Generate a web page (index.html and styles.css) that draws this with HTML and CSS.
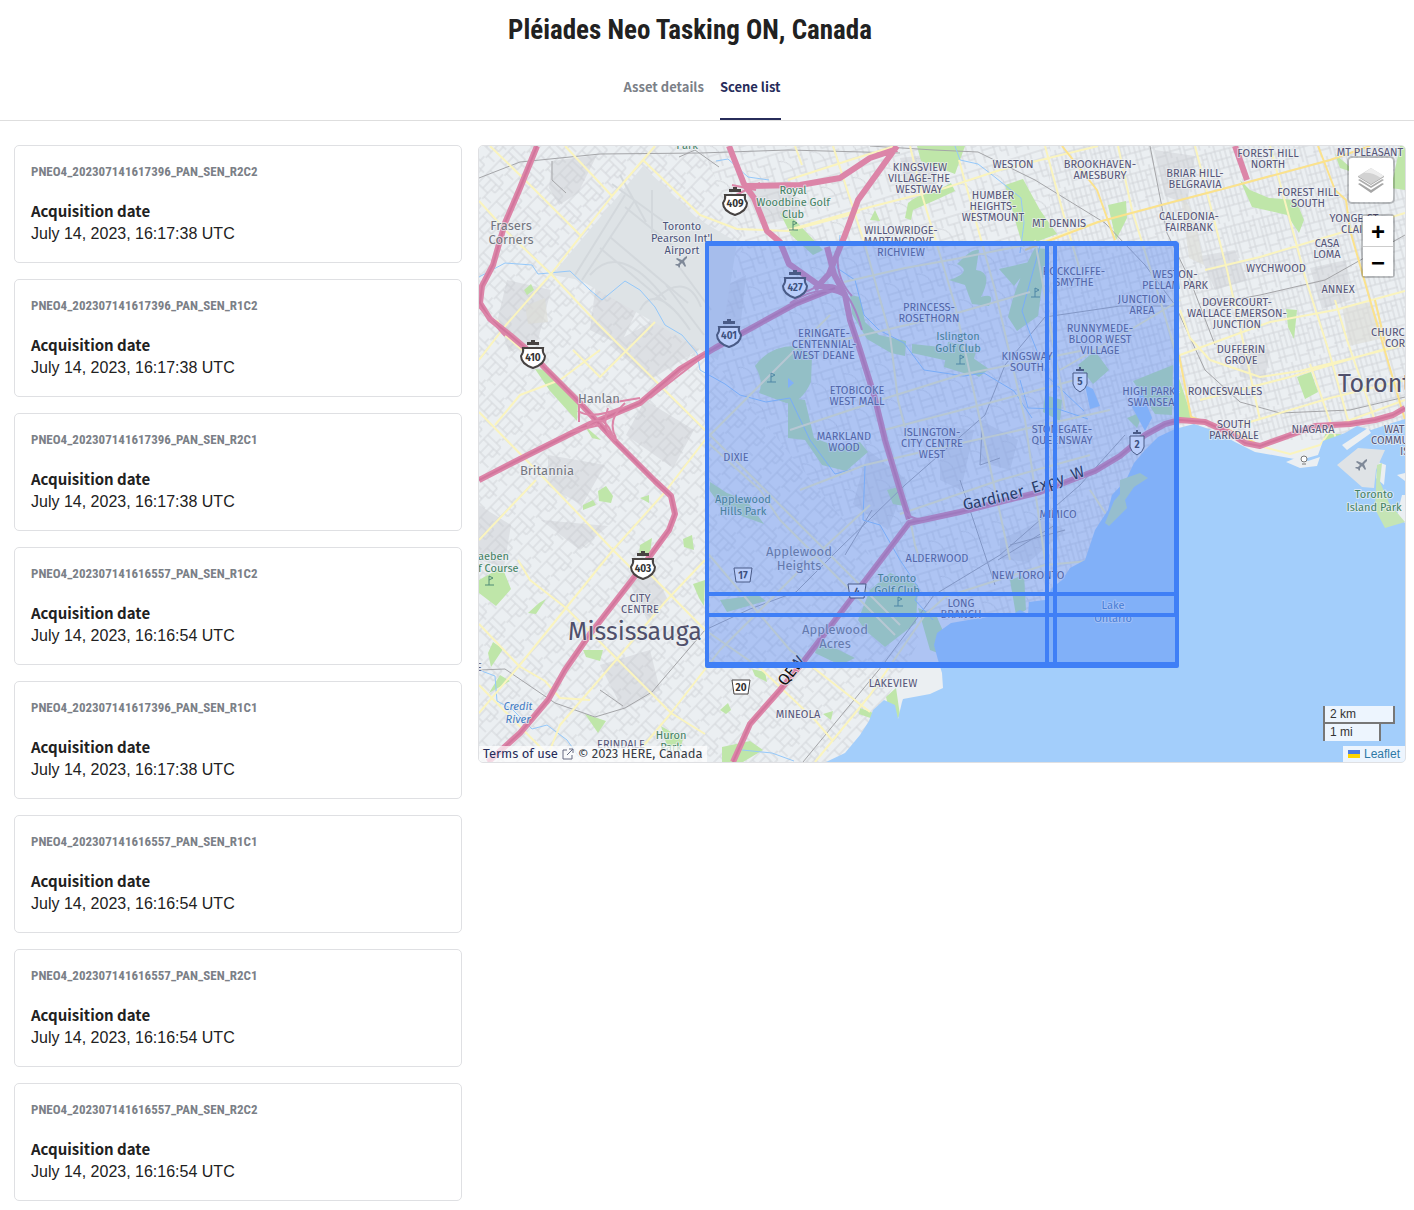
FILE: index.html
```html
<!DOCTYPE html>
<html lang="en">
<head>
<meta charset="utf-8">
<meta name="viewport" content="width=device-width, initial-scale=1">
<title>Pléiades Neo Tasking ON, Canada</title>
<link rel="stylesheet" href="styles.css">
</head>
<body>
<header class="header">
  <h1 class="title">Pléiades Neo Tasking ON, Canada</h1>
  <nav class="tabs">
    <a class="tab" href="#details">Asset details</a>
    <a class="tab tab-active" href="#scenes" aria-current="page">Scene list</a>
  </nav>
</header>
<main class="content">
  <section class="scenes" id="scenes">
    <article class="card"><h2 class="scene-name">PNEO4_202307141617396_PAN_SEN_R2C2</h2><h3 class="label">Acquisition date</h3><p class="date">July 14, 2023, 16:17:38 UTC</p></article>
    <article class="card"><h2 class="scene-name">PNEO4_202307141617396_PAN_SEN_R1C2</h2><h3 class="label">Acquisition date</h3><p class="date">July 14, 2023, 16:17:38 UTC</p></article>
    <article class="card"><h2 class="scene-name">PNEO4_202307141617396_PAN_SEN_R2C1</h2><h3 class="label">Acquisition date</h3><p class="date">July 14, 2023, 16:17:38 UTC</p></article>
    <article class="card"><h2 class="scene-name">PNEO4_202307141616557_PAN_SEN_R1C2</h2><h3 class="label">Acquisition date</h3><p class="date">July 14, 2023, 16:16:54 UTC</p></article>
    <article class="card"><h2 class="scene-name">PNEO4_202307141617396_PAN_SEN_R1C1</h2><h3 class="label">Acquisition date</h3><p class="date">July 14, 2023, 16:17:38 UTC</p></article>
    <article class="card"><h2 class="scene-name">PNEO4_202307141616557_PAN_SEN_R1C1</h2><h3 class="label">Acquisition date</h3><p class="date">July 14, 2023, 16:16:54 UTC</p></article>
    <article class="card"><h2 class="scene-name">PNEO4_202307141616557_PAN_SEN_R2C1</h2><h3 class="label">Acquisition date</h3><p class="date">July 14, 2023, 16:16:54 UTC</p></article>
    <article class="card"><h2 class="scene-name">PNEO4_202307141616557_PAN_SEN_R2C2</h2><h3 class="label">Acquisition date</h3><p class="date">July 14, 2023, 16:16:54 UTC</p></article>
  </section>

  <section class="map" aria-label="Map">
    <svg class="map-canvas" viewBox="479 146 926 616" preserveAspectRatio="xMidYMid slice">
      <defs>
        <pattern id="streets-west" width="32" height="26" patternUnits="userSpaceOnUse" patternTransform="rotate(-46)">
          <path class="street" d="M0 3H32M0 17H20M20 3V26M8 3V17M8 10H20M26 3V15H32M3 17V26M13 17V22H20M26 15V21H20"/>
        </pattern>
        <pattern id="streets-east" width="29" height="38" patternUnits="userSpaceOnUse" patternTransform="rotate(-15)">
          <path class="street" d="M0 5H29M0 14H17M0 23H29M11 31H29M3 0V38M8 5V23M13 0V38M18 5V38M23 0V23M28 5V38M18 10H23M3 34H13"/>
        </pattern>
        <pattern id="streets-mid" width="33" height="37" patternUnits="userSpaceOnUse" patternTransform="rotate(-17)">
          <path class="street" d="M0 4H33M4 4V37M4 12Q14 14 16 24M10 4V13M16 4V12H28M28 4V37M4 24H28M16 24V37M22 12V30H28M4 31H16M28 18H33"/>
        </pattern>
        <g id="crown-shield">
          <path class="shield-crown" d="M-6 -12v-3h4v-2h4v2h4v3z"/>
          <path class="shield" d="M-10 -9H10Q9 -5 12 -1Q12 7 0 11Q-12 7 -12 -1Q-9 -5 -10 -9Z"/>
        </g>
        <path id="county-shield" class="shield-thin" d="M-9 -7H9L7 7H-7Z"/>
        <g id="small-shield"><path class="shield-crown" d="M-4 -10v-2h3v-2h2v2h3v2z"/><path class="shield-thin" d="M-7 -8H7V3Q6 8 0 11Q-6 8 -7 3Z"/></g>
        <path id="golf" class="golf" d="M-4 4H5M0 4V-5L4 -3L0 -1"/>
        <path id="plane" class="plane" d="M5 -5L3 -4L0 -1L-5 -3L-6 -2L-2 1L-4 3L-6 3L-7 4L-4 5L-3 7L-2 6L-2 4L0 2L3 6L4 5L2 0L5 -3Z"/>
      </defs>

      <path class="land" d="M479 146H1405V762H479Z"/>
      <path fill="url(#streets-west)" d="M479 146H700L745 240L705 350L860 540L920 640L850 762H479Z"/>
      <path fill="url(#streets-mid)" d="M700 146H1050V620H920L860 540L705 350L745 240Z"/>
      <path fill="url(#streets-east)" d="M1050 146H1405V440H1180L1050 620Z"/>

      <g class="built">
        <path d="M552 161L597 155L578 193L559 205L549 188ZM597 276L642 300L620 345L590 330ZM507 280L551 290L538 340L509 352L498 318ZM610 345L690 300L704 346L650 380ZM645 400L694 430L673 468L626 435ZM548 455L605 465L582 505L548 486ZM479 505L511 525L504 567L479 560ZM541 520L608 526L580 550ZM629 582L655 574L668 600L648 622ZM600 665L650 650L660 690L623 710ZM700 300L746 275L740 330L706 345Z"/>
        <path d="M745 190L790 180L802 218L760 224ZM900 158L942 153L934 184L905 184ZM1155 150L1195 156L1187 204L1165 196ZM1200 256L1235 250L1247 280L1215 290ZM1310 268L1346 260L1350 300L1322 309ZM1240 345L1270 350L1265 380L1240 377ZM868 450L907 480L888 530L853 504ZM940 425L974 430L961 490L940 480ZM1000 540L1042 520L1066 530L1029 562L1000 559ZM980 420L1018 440L1010 470L981 462Z"/>
      </g>
      <path class="airport" d="M643 166L698 219L737 242L718 360L650 320L580 280L552 275Z"/>
      <path class="runways" d="M575 275L625 195M582 280L635 200M600 248L674 310M610 237L688 303M625 207L678 250M612 184L663 221M620 175L646 222M652 190V240M590 275Q620 240 666 300M654 300Q687 270 701 307M666 285L704 335M680 268L711 310M640 310Q656 280 690 330"/>

      <g class="park">
        <path d="M535 369L545 370L578 403L577 421L550 391ZM585 426L601 440L592 438ZM598 491L606 486L613 496L611 503L599 501ZM479 580L502 567L511 589L496 606L479 593ZM583 505l10-5l3 5l-13 5zM640 545l12-7l-2 15l-11 3zM683 539l9-4l2 15l-10-3zM693 584l12-4l-1 26l-5-8zM539 603l7-4l-10 15l-8-1zM583 650l20 0l-3 11l-14-4zM493 642l10 7l-12 18l-3-14zM500 675l10 6l-21 12zM722 747l28-6l13 9l-20 12h-21zM752 669l13 3l2 10l-12-6zM720 710l8-7l3 7l-5 4zM823 714l10-3l-2 9zM661 726l22 13l-4 14l-12-7zM585 714l21 7l-8 12zM524 290l7-6l3 6l-7 5zM640 498l9-3v8z"/>
        <path d="M917 146H965L955 174L921 161ZM908 203q10-9 25-10l18-10l4 8l-17 8l-25 11l-2 10l-6-2zM870 220l5-10l5 11zM780 213l13 5l30 32l-10 5l-22-20zM1005 185l18-6l17 31l17 24l-34 13zM957 264q15-16 22-14l-3 20q18 2 5 27q15-5 8 9l-17-2l-7-19l-16-5q25-8 8-16zM1035 248l12 1l-9 67l-21 15l-9-14q8-36 27-69zM850 295l10 2l5 25l14 13l27 6l-1 15l-14-3l-24-14l-15-25zM755 366q15-21 42-20l15 10l-1 26q-10 22-25 21l-27-10q5-12-4-27zM788 398l17 2l9 38l27 10l19-6l8 10l-22 19l-24-6l-17-25l-17-2zM912 344l48 5l29 20l-10 8l-26-15l-41-9zM999 269l35-8l-20 25zM948 342l29 5l-7 28l-26-8z"/>
        <path d="M710 482l17 11l20 8l17 23l-25-9l-19-10l-10-14zM870 590l20-17l28 12l-2 38l-31 24l-19-16l-8-11zM887 490l15-4l2 20l-11-2zM819 640l36 18l-15 7l-25-12zM918 608l18 7l11 25l-4 15l-13-5zM1010 580l14-5l2 35l-10 5zM1045 395l17 5l-2 21l-17-9zM1133 381l40-16l-1 50l-17-1zM1078 365l17-14l14 19l-16 14zM1127 418l17-7l-7 17zM1240 180l10 10l19 8l27 2l8 20l-5 13l-12-18l-35-8zM1108 205l18-4l1 17l-11 22zM1179 378l13 40h-13zM1297 377l14-5l7 20l-13 7zM1400 146h5v44l-14-2zM1286 309l11 1l-3 29l-6-12zM1335 154l23 20l-18-6z"/>
        <path d="M1376 465l8 4l3 25l12 18l6 12l-21 3l-9-20zM1325 434l16 0l-2 9l-16 2zM886 697l10-9l4 27l-7 10zM860 708l29 11l-10 2l-20-7zM720 600l38-5l8 6l-39 11z"/>
      </g>
      <path class="institution" d="M1342 306L1371 302L1384 338L1349 346ZM525 306L545 298L548 322L528 324ZM1180 192L1194 214L1204 265L1189 258Z"/>

      <g class="rail">
        <path d="M479 178L520 162L600 154L700 153L788 150L900 153M552 161V180L566 193M679 157L695 150L719 167M870 146L934 150L978 152L1035 180L1105 223L1145 265L1175 305L1205 370L1240 402L1280 413L1350 410L1405 397M1150 146L1167 233L1190 280L1215 345M1205 305L1260 295L1325 280L1405 235"/>
        <path d="M479 670L505 669L555 703L595 717L625 708L652 692L705 630L750 609L796 592L840 548L905 485L985 415L1005 365L1045 317L1120 306L1178 306M803 762L882 666L934 595L1000 555L1080 485L1125 435M960 480L985 555L995 585M845 555L872 510M1010 545L1065 530M998 560L1055 525M982 430L980 465L1000 458M600 690L623 706"/>
      </g>

      <g class="river">
        <path d="M479 277L505 263L532 265L538 274L570 271L590 290L602 300L625 281L640 290L655 307L665 325L682 335L697 353L700 370L725 384L740 395L766 402L790 398L810 440L835 474L865 466L863 520L880 525L900 560L920 590L915 600L933 620M716 161l12-2l20 18l21 3M955 146l5 14l18 4l13 10l30 24l3 25l-4 30M1040 246l-18 65l9 25l16 40l37 35M840 235l-3 33l18 12l9 35l15 15l25 13l20 27l40 6l20-3l30 18l18 27M1020 380l8 28l30 1l30 10M479 670l16 6l2 25l15 8l20 20l15-4l20 15l12 17M742 750l30 3l22 8"/>
      </g>

      <g class="road-yellow">
        <path d="M490 146L525 180L581 236M565 146L612 196M655 146L643 160L612 196L551 274L506 325L479 360M643 160L700 215L737 229L788 231L860 212M479 201L510 235L551 274L597 323L705 430L810 535L900 625M497 320L506 336L530 357M600 350L560 380L520 395L495 425M655 322L600 377L573 350M479 412L541 475L613 550L640 577M479 540L536 480M613 550L665 492L705 440L770 375L830 315M518 560L530 580L566 608L617 659L671 713L705 734M479 713L519 666L566 608L613 550M640 564L705 630L760 668L815 720L832 740M479 624L519 666L545 681L560 698L590 700M479 685L545 752M550 750L560 725L617 659L665 602L705 560M640 750L671 713L720 650L800 570L870 505M705 550L790 650L810 665L870 712M815 762L870 695L925 615L945 597L1045 565L1100 560M705 440L760 490L780 520L850 590L895 635"/>
        <path d="M788 180L850 160L895 146M788 230L870 207L945 188L1000 170L1098 146M795 146L802 165M833 146L844 180L865 245L890 335L898 400L908 440M910 146L922 195L955 305L980 420L1010 560M959 160L995 290L1025 420L1045 560M1045 146L1065 220L1080 270M1118 146L1132 210L1160 300L1178 360M1195 146L1227 270L1245 350L1260 420M1270 146L1306 280L1330 355L1348 420M1205 270L1260 257L1330 236L1405 213M1180 355L1270 322L1335 310L1405 291M1200 400L1290 377L1405 343M1240 425L1330 398L1405 380M1335 300L1347 340L1374 418M1310 364L1340 450M1180 310L1190 338L1210 360L1260 377L1300 371L1405 345M1065 410L1035 240M844 282L905 268L950 260L1045 241L1098 222M820 345L950 315L1030 292M790 430L880 400L960 375L1085 350M880 431L1000 400L1075 380M800 490L865 465L930 450L1110 410M900 514L1000 480L1090 455M910 519L915 545L920 560M1060 370L1130 330L1180 300M1090 490L1110 520L1100 550M1240 441L1290 454L1320 445L1334 426L1405 400"/>
      </g>
      <path class="road-gold" d="M1025 250L1098 222L1165 204L1230 187L1330 160L1370 146M1062 146L1097 190L1115 240M1318 146L1335 190L1346 200L1350 230L1370 300L1405 420M1179 355L1191 417M1191 417L1235 432L1255 443M1375 300L1385 343"/>

      <path class="water" d="M826 762L845 753L860 735L869 721L873 710L884 700L895 705L898 719L902 702L903 699L930 694L943 688L942 673L938 660L934 645L937 633L951 623L980 618L1013 614L1020 610L1028 614L1029 602L1045 600L1052 588L1062 580L1070 568L1085 560L1095 530L1108 510L1112 495L1126 480L1134 463L1145 450L1158 437L1175 429L1194 424L1215 431L1235 442L1255 452L1278 456L1300 460L1318 455L1323 441L1345 433L1357 426L1371 430L1389 424L1405 419V762Z"/>
      <path class="water" d="M1132 407L1142 392L1152 418L1145 431ZM1085 385l8 4l7 17l-10 3zM788 378l6 5l-6 5z"/>
      <path class="land" d="M1286 462l12-5l10 4l12-4l-3 9l-17 2zM1378 462l8 3l-2 20l-8-7zM1397 475l8-2v8zM1402 495l3 0v28l-8-8zM1342 445l26-17l3 5l-24 17z"/>
      <path class="airport-island" d="M1337 465L1358 448L1385 450L1376 470L1374 488L1362 487Z"/>
      <path class="island" d="M1377 465L1382 463L1380 482L1389 503L1405 522L1385 528L1375 509ZM1120 480l20-7l8 5l-14 9l-9 13l2 8l-18 18l-4-3l9-22l6-7z"/>

      <path class="highway" d="M537 146L520 188L505 223L493 265L482 286L480 303L490 319L510 335L530 352L545 368L580 403L616 442L655 481L671 496L675 514L669 530L650 556L632 580L590 634L565 670L548 700L520 733L488 762M479 480L530 454L590 424L640 403L680 369L715 348L795 304L835 288M729 146L744 184L754 198L767 231L780 242L789 264L820 286L845 292M744 186L800 185L840 178L870 158L897 149M897 146L858 200L845 235L829 274L815 289M827 247L834 274L845 295L850 320L860 350L874 395L885 440L900 490L909 519M733 762L750 724L780 690L803 662L855 594L909 523L960 512L1040 492L1095 471L1120 456L1145 435L1165 424L1180 420L1205 422L1230 433L1245 443L1260 446L1285 437L1315 426L1350 424L1375 420L1393 415L1405 408M1235 146L1247 180"/>
      <path class="highway-core" d="M537 146L520 188L505 223L493 265L482 286L480 303L490 319L510 335L530 352L545 368L580 403L616 442L655 481L671 496L675 514L669 530L650 556L632 580L590 634L565 670L548 700L520 733L488 762M479 480L530 454L590 424L640 403L680 369L715 348L795 304L835 288M850 320L860 350L874 395L885 440L900 490L909 519M733 762L750 724L780 690L803 662L855 594L909 523L960 512L1040 492L1095 471L1120 456L1145 435L1165 424L1180 420L1205 422L1230 433L1245 443L1260 446L1285 437L1315 426L1350 424L1375 420L1393 415L1405 408"/>
      <path class="ramp" d="M479 307L505 336M578 411Q592 420 620 408M579 405V422M587 426Q605 410 614 440M570 432L600 425M608 408Q600 430 616 441M610 403L640 398M625 403Q606 420 616 438M732 185L756 190M736 195L760 183M815 290Q845 270 862 330M790 303Q825 280 850 300M830 270Q825 285 805 292M905 512Q915 523 930 517M650 398L705 355M838 250Q835 278 852 296"/>

      <g class="place">
        <text x="920" y="171">KINGSVIEW</text><text x="919" y="182">VILLAGE-THE</text><text x="919" y="193">WESTWAY</text>
        <text x="1013" y="168">WESTON</text><text x="1100" y="168">BROOKHAVEN-</text><text x="1100" y="179">AMESBURY</text>
        <text x="993" y="199">HUMBER</text><text x="993" y="210">HEIGHTS-</text><text x="993" y="221">WESTMOUNT</text>
        <text x="1059" y="227">MT DENNIS</text><text x="1195" y="177">BRIAR HILL-</text><text x="1195" y="188">BELGRAVIA</text>
        <text x="1268" y="157">FOREST HILL</text><text x="1268" y="168">NORTH</text><text x="1370" y="156">MT PLEASANT</text>
        <text x="1308" y="196">FOREST HILL</text><text x="1308" y="207">SOUTH</text><text x="1189" y="220">CALEDONIA-</text><text x="1189" y="231">FAIRBANK</text>
        <text x="1355" y="222">YONGE-ST.</text><text x="1355" y="233">CLAIR</text><text x="1327" y="247">CASA</text><text x="1327" y="258">LOMA</text>
        <text x="1276" y="272">WYCHWOOD</text><text x="1338" y="293">ANNEX</text>
        <text x="901" y="234">WILLOWRIDGE-</text><text x="901" y="245">MARTINGROVE-</text><text x="901" y="256">RICHVIEW</text>
        <text x="1074" y="275">ROCKCLIFFE-</text><text x="1074" y="286">SMYTHE</text><text x="1175" y="278">WESTON-</text><text x="1175" y="289">PELLAM PARK</text>
        <text x="1142" y="303">JUNCTION</text><text x="1142" y="314">AREA</text><text x="1237" y="306">DOVERCOURT-</text><text x="1237" y="317">WALLACE EMERSON-</text><text x="1237" y="328">JUNCTION</text>
        <text x="929" y="311">PRINCESS-</text><text x="929" y="322">ROSETHORN</text><text x="824" y="337">ERINGATE-</text><text x="824" y="348">CENTENNIAL-</text><text x="824" y="359">WEST DEANE</text>
        <text x="1100" y="332">RUNNYMEDE-</text><text x="1100" y="343">BLOOR WEST</text><text x="1100" y="354">VILLAGE</text><text x="1241" y="353">DUFFERIN</text><text x="1241" y="364">GROVE</text>
        <text x="1027" y="360">KINGSWAY</text><text x="1027" y="371">SOUTH</text><text x="857" y="394">ETOBICOKE</text><text x="857" y="405">WEST MALL</text>
        <text x="1151" y="395">HIGH PARK-</text><text x="1151" y="406">SWANSEA</text><text x="1225" y="395">RONCESVALLES</text>
        <text x="844" y="440">MARKLAND</text><text x="844" y="451">WOOD</text><text x="932" y="436">ISLINGTON-</text><text x="932" y="447">CITY CENTRE</text><text x="932" y="458">WEST</text>
        <text x="1062" y="433">STONEGATE-</text><text x="1062" y="444">QUEENSWAY</text><text x="1234" y="428">SOUTH</text><text x="1234" y="439">PARKDALE</text><text x="1313" y="433">NIAGARA</text>
        <text x="736" y="461">DIXIE</text><text x="1058" y="518">MIMICO</text><text x="937" y="562">ALDERWOOD</text><text x="1028" y="579">NEW TORONTO</text>
        <text x="961" y="607">LONG</text><text x="961" y="618">BRANCH</text><text x="893" y="687">LAKEVIEW</text><text x="798" y="718">MINEOLA</text>
        <text x="640" y="602">CITY</text><text x="640" y="613">CENTRE</text><text x="621" y="748">ERINDALE</text>
        <text class="start" x="1371" y="336">CHURCH</text><text class="start" x="1385" y="347">CORKTOWN</text>
        <text class="start" x="1384" y="433">WATERFRONT</text><text class="start" x="1371" y="444">COMMUNITIES</text><text class="start" x="1400" y="455">ISLAND</text><text class="start" x="476" y="671">E</text>
      </g>
      <g class="town">
        <text x="511" y="230">Frasers</text><text x="511" y="244">Corners</text><text x="599" y="403">Hanlan</text><text x="547" y="475">Britannia</text>
        <text x="799" y="556">Applewood</text><text x="799" y="570">Heights</text><text x="835" y="634">Applewood</text><text x="835" y="648">Acres</text>
      </g>
      <g class="airport-name">
        <text x="682" y="230">Toronto</text><text x="682" y="242">Pearson Int'l</text><text x="682" y="254">Airport</text>
      </g>
      <g class="park-name">
        <text x="687" y="149">Park</text><text x="793" y="194">Royal</text><text x="793" y="206">Woodbine Golf</text><text x="793" y="218">Club</text>
        <text x="958" y="340">Islington</text><text x="958" y="352">Golf Club</text><text x="743" y="503">Applewood</text><text x="743" y="515">Hills Park</text>
        <text x="897" y="582">Toronto</text><text x="897" y="594">Golf Club</text><text x="1374" y="498">Toronto</text><text x="1374" y="511">Island Park</text>
        <text x="671" y="739">Huron</text><text x="671" y="751">Park</text><text class="start" x="478" y="560">aeben</text><text class="start" x="478" y="572">f Course</text>
      </g>
      <g class="water-name"><text x="1113" y="609">Lake</text><text x="1113" y="622">Ontario</text><text class="italic" x="518" y="710">Credit</text><text class="italic" x="518" y="723">River</text></g>
      <g class="city"><text x="635" y="640">Mississauga</text><text class="start" x="1338" y="392">Toronto</text></g>
      <path id="gardiner" class="text-path" d="M964 510Q1030 498 1100 470"/>
      <text class="road-name"><textPath href="#gardiner">Gardiner  Expy  W</textPath></text>
      <text class="road-name" transform="translate(785 687) rotate(-51)">QEW</text>

      <g class="route">
        <use href="#crown-shield" x="735" y="204"/><text x="735" y="207">409</text>
        <use href="#crown-shield" x="795" y="287"/><text x="795" y="291">427</text>
        <use href="#crown-shield" x="729" y="336"/><text x="729" y="339">401</text>
        <use href="#crown-shield" x="533" y="357"/><text x="533" y="361">410</text>
        <use href="#crown-shield" x="643" y="568"/><text x="643" y="572">403</text>
        <use href="#small-shield" x="1080" y="381"/><text x="1080" y="385">5</text>
        <use href="#small-shield" x="1137" y="444"/><text x="1137" y="448">2</text>
        <use href="#county-shield" x="743" y="575"/><text x="743" y="579">17</text>
        <use href="#county-shield" x="857" y="591"/><text x="857" y="595">4</text>
        <use href="#county-shield" x="741" y="687"/><text x="741" y="691">20</text>
      </g>
      <use href="#golf" x="793" y="226"/><use href="#golf" x="1035" y="293"/><use href="#golf" x="771" y="378"/><use href="#golf" x="960" y="360"/><use href="#golf" x="898" y="602"/><use href="#golf" x="489" y="581"/>
      <use href="#plane" x="682" y="261"/><use href="#plane" x="1362" y="464"/>
      <g class="lighthouse"><circle cx="1304" cy="459" r="3"/><path d="M1302 464h4"/></g>

      <g class="footprints">
        <rect class="footprint-fill" x="707" y="243" width="470" height="422"/>
        <path class="footprint-line" d="M707 243H1055V615H707ZM1047 243H1176V615H1047ZM707 594H1055V664H707ZM1047 594H1177V664H1047ZM707 244H1177V666H707Z"/>
      </g>
    </svg>

    <div class="controls">
      <button class="layers" type="button" aria-label="Layers">
        <svg width="26" height="26" viewBox="0 0 26 26" aria-hidden="true">
          <path fill="#a6a6a6" d="M0 17L4 15L13 20L22 15L26 17L13 26Z"/><path fill="#fff" d="M0 15L13 23L26 15L22 13H4Z"/>
          <path fill="#adadad" d="M0 13L4 11L13 16L22 11L26 13L13 21Z"/><path fill="#fff" d="M0 11L13 19L26 11L22 9H4Z"/>
          <path fill="#d2d2d2" d="M0 9L13 1L26 9L13 17Z"/><path fill="#ededed" d="M13 1L26 9L23 11Q14 5 6 6Z"/><path fill="#a6a6a6" d="M0 9L13 17L26 9V10L13 18L0 10Z"/>
        </svg>
      </button>
      <div class="zoom">
        <button class="zoom-button" type="button" aria-label="Zoom in">+</button>
        <button class="zoom-button" type="button" aria-label="Zoom out">−</button>
      </div>
    </div>
    <div class="attribution">
      <a class="terms" href="#terms">Terms of use
        <svg class="external" viewBox="0 0 12 12" aria-hidden="true"><path d="M5 2H1V11H10V7M7 1H11V5M11 1L5 7"/></svg></a>
      <span>© 2023 HERE, Canada</span>
    </div>
    <div class="corner">
      <div class="scale scale-km">2 km</div>
      <div class="scale scale-mi">1 mi</div>
      <div class="leaflet"><svg width="12" height="8" viewBox="0 0 12 8" aria-hidden="true"><path fill="#4c7be1" d="M0 0h12v4H0z"/><path fill="#ffd500" d="M0 4h12v4H0z"/></svg><a href="#leaflet">Leaflet</a></div>
    </div>
  </section>
</main>
</body>
</html>
```

FILE: styles.css
```css
* { box-sizing: border-box; }
body {
  margin: 0;
  background: #fff;
  color: #212121;
  font-family: "Liberation Sans", Arial, sans-serif;
  font-size: 16px;
}
h1, h2, h3, p { margin: 0; }

.header { border-bottom: 1px solid #dedede; }
.title {
  padding: 10px 34px 0 0;
  text-align: center;
  font: 700 27px/40px "Roboto Condensed", "Liberation Sans Narrow", Roboto, sans-serif;
}
.tabs {
  display: flex;
  justify-content: center;
  gap: 16px;
  padding: 26px 10px 0 0;
}
.tab {
  padding-bottom: 20px;
  border-bottom: 2px solid transparent;
  color: #7b8087;
  font: 700 13px/22px "Source Sans Pro", "Noto Sans CJK SC", sans-serif;
  text-decoration: none;
}
.tab-active { color: #272c5a; border-bottom-color: #272c5a; }

.content {
  display: grid;
  grid-template-columns: minmax(0, 14fr) minmax(0, 29fr);
  align-items: start;
  gap: 16px;
  padding: 24px 8px 8px 14px;
}
.scenes { display: grid; gap: 16px; }
.card {
  padding: 16px;
  border: 1px solid #dfe0e3;
  border-radius: 5px;
}
.scene-name {
  margin-bottom: 18px;
  color: #7b8087;
  font: 700 13px/20px "Roboto Condensed", "Liberation Sans Narrow", Roboto, sans-serif;
}
.label { font: 700 15px/22px "Source Sans Pro", "Noto Sans CJK SC", sans-serif; }
.date { font-size: 16px; line-height: 24px; }

.map {
  position: relative;
  overflow: hidden;
  border: 1px solid #dfe0e3;
  border-radius: 5px;
}
.map-canvas { display: block; width: 100%; height: auto; }

.land { fill: #ebeff2; }
.street { fill: none; stroke: #d2d5d9; stroke-width: 1; }
.built { fill: #c9cbd0; opacity: .4; }
.airport { fill: #dee3e6; }
.runways { fill: none; stroke: #d3d8dc; stroke-width: 2; }
.park { fill: #bfe6a9; }
.institution { fill: #dcdcd6; opacity: .6; }
.rail { fill: none; stroke: #a4a5a8; stroke-width: 1; }
.river { fill: none; stroke: #94c8fa; stroke-width: 1; }
.water { fill: #a3cefb; }
.airport-island { fill: #dfe3e6; }
.island { fill: #c5e5b5; }
.road-yellow { fill: none; stroke: #faf4be; stroke-width: 2; stroke-linejoin: round; }
.road-gold { fill: none; stroke: #fbe28c; stroke-width: 2; stroke-linejoin: round; }
.highway { fill: none; stroke: #dc85a8; stroke-width: 6; stroke-linejoin: round; }
.highway-core { fill: none; stroke: #d2759c; stroke-width: 2; stroke-linejoin: round; }
.ramp { fill: none; stroke: #dc85a8; stroke-width: 2; }

.map-canvas text {
  text-anchor: middle;
  paint-order: stroke;
  stroke: rgba(239, 242, 245, .7);
  stroke-width: 2px;
  stroke-linejoin: round;
  font-family: "Fira Sans", "Noto Sans CJK SC", "Noto Sans", sans-serif;
}
.map-canvas .start { text-anchor: start; }
.place { fill: #575678; font-size: 11px; }
.town { fill: #74767f; font-size: 13px; }
.airport-name { fill: #4c5479; font-size: 11px; }
.park-name { fill: #438162; font-size: 11px; }
.water-name { fill: #437cc4; font-size: 11px; }
.italic { font-style: italic; }
.city { fill: #50506b; font-size: 25px; }
.text-path { fill: none; }
.map-canvas .road-name { fill: #111; font-size: 16px; text-anchor: start; white-space: pre; }
.shield { fill: #fff; stroke: #474342; stroke-width: 2; }
.shield-thin { fill: #fff; stroke: #474342; stroke-width: 1; }
.shield-crown { fill: #474342; }
.map-canvas .route text { fill: #333; stroke: none; font-size: 10px; font-weight: 700; }
.golf { fill: none; stroke: #4e8b74; stroke-width: 1; }
.plane { fill: #7f8998; }
.lighthouse { fill: #fff; stroke: #777; }
.footprint-fill { fill: #4e82f5; fill-opacity: .39; }
.footprint-line { fill: none; stroke: #3f7ff6; stroke-width: 4; stroke-linejoin: round; }

.controls {
  position: absolute;
  top: 10px;
  right: 10px;
  display: flex;
  flex-direction: column;
  align-items: flex-end;
  gap: 10px;
}
.layers {
  display: grid;
  place-items: center;
  width: 48px;
  height: 48px;
  padding: 0;
  border: 2px solid rgba(0, 0, 0, .2);
  border-radius: 5px;
  background: #fff;
  background-clip: padding-box;
}
.zoom {
  border: 2px solid rgba(0, 0, 0, .2);
  border-radius: 4px;
}
.zoom-button {
  display: block;
  width: 30px;
  height: 30px;
  padding: 2px 0 0;
  border: 0;
  background: #fff;
  color: #000;
  font: 700 24px/28px "Liberation Sans", sans-serif;
}
.zoom-button + .zoom-button { border-top: 1px solid #ccc; }

.attribution {
  position: absolute;
  bottom: 0;
  left: 0;
  display: flex;
  align-items: center;
  gap: 4px;
  padding: 0 4px;
  background: rgba(255, 255, 255, .7);
  color: #383c45;
  font: 400 13px/16px "Fira Sans", "Noto Sans CJK SC", sans-serif;
}
.terms { display: flex; align-items: center; gap: 4px; color: #272c5a; text-decoration: none; }
.external { width: 12px; height: 12px; fill: none; stroke: #666b82; }
.corner {
  position: absolute;
  right: 0;
  bottom: 0;
  display: flex;
  flex-direction: column;
  align-items: flex-start;
  font-size: 12px;
}
.scale {
  padding: 0 5px;
  border: 2px solid #777;
  border-top: 0;
  background: rgba(255, 255, 255, .8);
  color: #333;
  line-height: 16px;
}
.scale-km { width: 72px; height: 18px; margin-right: 10px; }
.scale-mi { width: 58px; height: 17px; border-bottom: 0; }
.leaflet {
  display: flex;
  align-items: center;
  align-self: flex-end;
  gap: 4px;
  margin-top: 5px;
  padding: 0 5px;
  background: rgba(255, 255, 255, .8);
  line-height: 16px;
}
.leaflet a { color: #2d79a5; text-decoration: none; }
```
